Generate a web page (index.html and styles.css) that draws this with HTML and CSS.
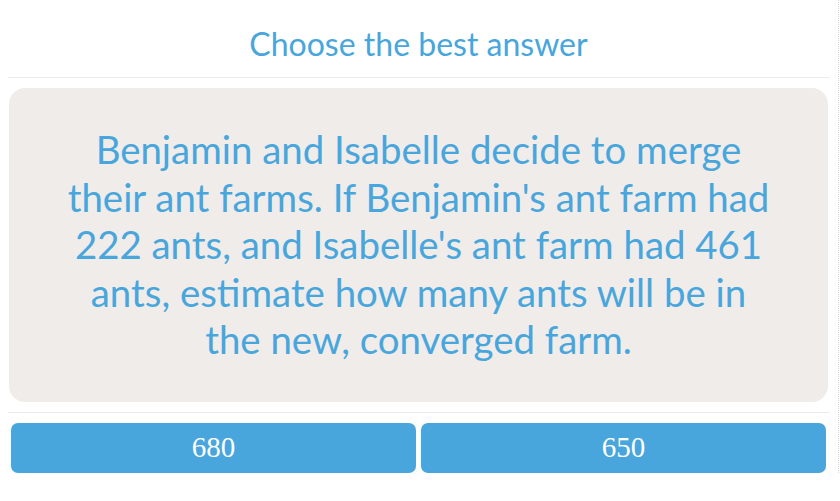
FILE: index.html
```html
<!DOCTYPE html>
<html lang="en">
<head>
    <meta charset="UTF-8">
    <title>Choose the best answer</title>
    <link rel="stylesheet" href="styles.css">
</head>
<body>
    <div class="quiz">
        <h1 class="quiz-title">Choose the best answer</h1>
        <div class="question">
            <p>Benjamin and Isabelle decide to merge their ant farms. If Benjamin's ant farm had 222 ants, and Isabelle's ant farm had 461 ants, estimate how many ants will be in the new, converged farm.</p>
        </div>
        <div class="answers">
            <button class="answer-button">680</button>
            <button class="answer-button">650</button>
        </div>
    </div>
</body>
</html>
```

FILE: styles.css
```css
html {
    border-right: 1px dotted #d8d8d8;
    width: 839px;
    box-sizing: border-box;
}
body {
    margin: 0;
    padding: 0 10px 0 8px;
    background: #fff;
    font-family: Lato, "Open Sans", sans-serif;
}
.quiz {
    width: 821px;
}
.quiz-title {
    margin: 0;
    padding: 26px 0 15px;
    font-size: 32px;
    font-weight: normal;
    line-height: 36px;
    color: #48a6dc;
    text-align: center;
    border-bottom: 1px solid #ebebeb;
}
.question {
    margin: 10px 1px 0;
    background-color: #f0ece9;
    border-radius: 16px;
    padding: 38px 52px 38px;
}
.question p {
    margin: 0;
    font-size: 38.4px;
    line-height: 47.5px;
    color: #48a6dc;
    text-align: center;
}
.answers {
    display: flex;
    gap: 5px;
    margin-top: 10px;
    padding: 10px 3px 0;
    border-top: 1px solid #ebebeb;
}
.answer-button {
    flex: 1;
    height: 50px;
    background-color: #49a6dc;
    color: #fff;
    border: none;
    border-radius: 7px;
    font-family: "Liberation Serif", serif;
    font-size: 29px;
    cursor: pointer;
}
```
